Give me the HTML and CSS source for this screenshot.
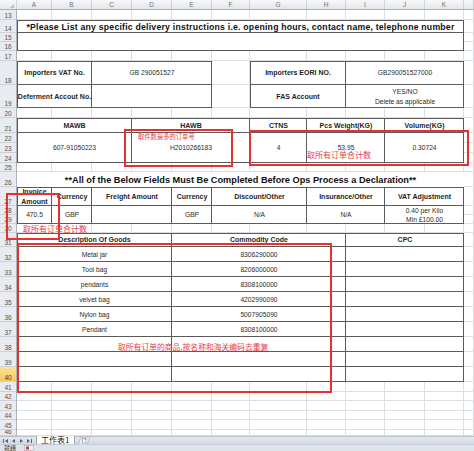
FILE: index.html
```html
<!DOCTYPE html>
<html>
<head>
<meta charset="utf-8">
<link rel="stylesheet" href="styles.css">
</head>
<body>
<div class="sheet">
  <div class="colhdrs">
    <span class="corner"></span><span>A</span><span>B</span><span>C</span><span>D</span><span>E</span><span>F</span><span>G</span><span>H</span><span>I</span><span>J</span><span>K</span><span></span>
  </div>
  <div class="rowhdrs">
    <span>13</span><span>14</span><span>15</span><span>16</span><span>17</span><span>18</span><span>19</span><span>20</span><span>21</span><span>22</span><span>23</span><span>24</span><span>25</span><span>26</span><span>27</span><span>28</span><span>29</span><span>30</span><span>31</span><span>32</span><span>33</span><span>34</span><span>35</span><span>36</span><span>37</span><span>38</span><span>39</span><span class="sel">40</span><span>41</span><span>42</span><span>43</span><span>44</span><span>45</span><span>46</span>
  </div>
  <div class="hlines"><i></i><i></i><i></i><i></i><i></i><i></i><i></i><i></i><i></i><i></i><i></i><i></i><i></i><i></i><i></i><i></i><i></i><i></i><i></i><i></i><i></i><i></i><i></i><i></i><i></i><i></i><i></i><i></i><i></i><i></i><i></i><i></i><i></i><i></i></div>
  <div class="vlines"><i></i><i></i><i></i><i></i><i></i><i></i><i></i><i></i><i></i><i></i><i></i><i></i></div>

  <div class="tbl box14">
    <div class="c title14">*Please List any specific delivery instructions i.e. opening hours, contact name, telephone number</div>
    <div class="c"></div>
  </div>

  <div class="tbl vat">
    <div class="c b">Importers VAT No.</div><div class="c">GB 290051527</div>
    <div class="c b">Deferment Accout No.</div><div class="c"></div>
  </div>

  <div class="tbl eori">
    <div class="c b">Importers EORI NO.</div><div class="c">GB290051527000</div>
    <div class="c b">FAS Account</div><div class="c two">YES/NO<br>Delete as applicable</div>
  </div>

  <div class="tbl awb">
    <div class="c b">MAWB</div><div class="c b">HAWB</div><div class="c b">CTNS</div><div class="c b">Pcs Weight(KG)</div><div class="c b">Volume(KG)</div>
    <div class="c">607-91050223</div><div class="c">H2010266183</div><div class="c">4</div><div class="c">53.95</div><div class="c">0.30724</div>
  </div>

  <div class="title26">**All of the Below Fields Must Be Completed Before Ops Process a Declaration**</div>

  <div class="tbl inv">
    <div class="c b two">Invoice<br>Amount</div><div class="c b">Currency</div><div class="c b top">Freight Amount</div><div class="c b">Currency</div><div class="c b">Discount/Other</div><div class="c b">Insurance/Other</div><div class="c b">VAT Adjustment</div>
    <div class="c">470.5</div><div class="c">GBP</div><div class="c"></div><div class="c">GBP</div><div class="c">N/A</div><div class="c">N/A</div><div class="c two">0.40 per Kilo<br>Min £100.00</div>
  </div>

  <div class="tbl goods">
    <div class="c b">Description Of Goods</div><div class="c b">Commodity Code</div><div class="c b">CPC</div>
    <div class="c">Metal jar</div><div class="c">8306290000</div><div class="c"></div>
    <div class="c">Tool bag</div><div class="c">8206000000</div><div class="c"></div>
    <div class="c">pendants</div><div class="c">8308100000</div><div class="c"></div>
    <div class="c">velvet bag</div><div class="c">4202990090</div><div class="c"></div>
    <div class="c">Nylon bag</div><div class="c">5007905090</div><div class="c"></div>
    <div class="c">Pendant</div><div class="c">8308100000</div><div class="c"></div>
    <div class="c"></div><div class="c"></div><div class="c"></div>
    <div class="c"></div><div class="c"></div><div class="c"></div>
    <div class="c"></div><div class="c"></div><div class="c"></div>
  </div>

  <div class="mark m1"></div>
  <div class="mark m2"></div>
  <div class="mark m3"></div>
  <div class="mark m4"></div>

  <div class="note n1">取件数最多的订单号</div>
  <div class="note n2">取所有订单合计数</div>
  <div class="note n3">取所有订单合计数</div>
  <div class="note n4">取所有订单的商品,按名称和海关编码去重复</div>
</div>

<div class="tabs">
  <svg class="nav" width="30" height="6" viewBox="0 0 30 6">
    <rect x="0" y="1" width="1" height="4" fill="#5a6470"/>
    <polygon points="5,1 5,5 2,3" fill="#5a6470"/>
    <polygon points="12,1 12,5 9,3" fill="#5a6470"/>
    <polygon points="17,1 17,5 20,3" fill="#5a6470"/>
    <polygon points="24,1 24,5 27,3" fill="#5a6470"/>
    <rect x="28" y="1" width="1" height="4" fill="#5a6470"/>
  </svg>
  <div class="tab">工作表1</div>
  <svg class="newsheet" width="12" height="8" viewBox="0 0 12 8">
    <polygon points="0,8 3,0 12,0 9,8" fill="#e9edf2" stroke="#9aa5b2" stroke-width="0.6"/>
    <rect x="4.5" y="1.5" width="3.5" height="4.5" fill="#fff" stroke="#7b8796" stroke-width="0.6"/>
    <circle cx="7.5" cy="2" r="1" fill="#e3a21a"/>
  </svg>
</div>
<div class="status">
  <span class="ready">就绪</span>
  <svg class="rec" width="10" height="6" viewBox="0 0 10 6">
    <rect x="0.5" y="0.5" width="9" height="5" fill="#f4f6f8" stroke="#9aa5b2" stroke-width="0.6"/>
    <rect x="2" y="1.5" width="3" height="3" fill="#c43c3c"/>
  </svg>
</div>
</body>
</html>
```

FILE: styles.css
```css
:root {
  --cols: 35px 40px 40px 40px 40px 38px 57px 39px 39px 40px 39px 10px;
  --rows: 10px 13px 9px 9px 10px 24px 23px 10px 15px 10px 10px 10px 9px 15px 19px 9px 9px 9px 14px repeat(9, 15px) 10px 9px 10px 9px 10px 6px;
  --line: #5b5b5b;
  --grid: #dcdfe2;
  --red: #e5312f;
}

* {
  box-sizing: border-box;
  margin: 0;
  padding: 0;
}

html,
body {
  width: 474px;
  height: 451px;
  overflow: hidden;
  background: #fff;
}

body {
  font-family: "Liberation Sans", Arial, "Noto Sans CJK SC", sans-serif;
  font-size: 6.7px;
  color: #2a2a2a;
}

.sheet {
  position: relative;
  display: grid;
  grid-template-columns: 17px var(--cols);
  grid-template-rows: 10px var(--rows);
  height: 436px;
  overflow: hidden;
}

/* column headers */
.colhdrs {
  grid-row: 1;
  grid-column: 1 / -1;
  display: grid;
  grid-template-columns: 17px var(--cols);
  background: linear-gradient(#f7f8fa, #e3e6ea);
  border-bottom: 1px solid #aab2bc;
}

.colhdrs span {
  border-right: 1px solid #cdd2d8;
  text-align: center;
  font-size: 6.5px;
  line-height: 9px;
  color: #6d7278;
}

.colhdrs .corner {
  position: relative;
}

.colhdrs .corner::after {
  content: "";
  position: absolute;
  right: 2px;
  bottom: 1px;
  border-left: 4px solid transparent;
  border-bottom: 4px solid #b8bec6;
}

/* row headers */
.rowhdrs {
  grid-column: 1;
  grid-row: 2 / -1;
  display: grid;
  grid-template-rows: var(--rows);
  background: #e8ebef;
  border-right: 1px solid #aab2bc;
}

.rowhdrs span {
  border-bottom: 1px solid #cdd2d8;
  font-size: 6.5px;
  line-height: 7px;
  color: #4d535a;
  display: flex;
  align-items: flex-end;
  justify-content: center;
  overflow: hidden;
}

.rowhdrs .sel {
  background: linear-gradient(#fbe39a, #f4c95a);
  color: #3a3a3a;
}

/* gridlines */
.hlines {
  grid-column: 2 / -1;
  grid-row: 2 / -1;
  display: grid;
  grid-template-rows: var(--rows);
}

.hlines i {
  border-bottom: 1px solid var(--grid);
}

.vlines {
  grid-column: 2 / -1;
  grid-row: 2 / -1;
  display: grid;
  grid-template-columns: var(--cols);
}

.vlines i {
  border-right: 1px solid var(--grid);
}

/* bordered tables */
.tbl {
  display: grid;
  background: #fff;
  box-shadow: inset 1px 1px 0 var(--line);
}

.c {
  box-shadow: inset -1px -1px 0 var(--line);
  display: flex;
  align-items: center;
  justify-content: center;
  text-align: center;
  line-height: 8px;
  white-space: nowrap;
}

.b {
  font-weight: bold;
  font-size: 7px;
  color: #1f1f1f;
}

.two {
  line-height: 9.5px;
}

.box14 {
  grid-column: 2 / 13;
  grid-row: 3 / 6;
  grid-template-rows: 13px 18px;
}

.title14 {
  font-weight: bold;
  font-size: 8.7px;
  letter-spacing: 0.22px;
  color: #111;
}

.vat {
  grid-column: 2 / 7;
  grid-row: 7 / 9;
  grid-template-columns: 75px 120px;
  grid-template-rows: 24px 23px;
}

.eori {
  grid-column: 8 / 13;
  grid-row: 7 / 9;
  grid-template-columns: 96px 118px;
  grid-template-rows: 24px 23px;
}

.awb {
  grid-column: 2 / 13;
  grid-row: 10 / 14;
  grid-template-columns: 115px 118px 57px 78px 79px;
  grid-template-rows: 15px 30px;
}

.title26 {
  grid-column: 2 / 13;
  grid-row: 15;
  background: #fff;
  display: flex;
  align-items: center;
  justify-content: center;
  font-weight: bold;
  font-size: 9.2px;
  color: #111;
  white-space: nowrap;
}

.inv {
  grid-column: 2 / 13;
  grid-row: 16 / 19;
  grid-template-columns: 35px 40px 80px 40px 95px 78px 79px;
  grid-template-rows: 19px 18px;
}

.goods {
  grid-column: 2 / 13;
  grid-row: 20 / 30;
  grid-template-columns: 155px 174px 118px;
  grid-template-rows: 14px repeat(9, 15px);
}

/* red annotations */
.mark {
  position: absolute;
  border: 2px solid var(--red);
}

.m1 { left: 124px; top: 129px; width: 109px; height: 38px; }
.m2 { left: 249px; top: 130px; width: 220px; height: 36px; }
.m3 { left: 6px; top: 193px; width: 54px; height: 47px; }
.m4 { left: 17px; top: 243px; width: 315px; height: 150px; }

.note {
  position: absolute;
  color: #ea3b3e;
  font-family: "Noto Sans CJK SC", sans-serif;
  white-space: nowrap;
  line-height: 1;
}

.n1 { left: 138px; top: 134px; font-size: 6.3px; }
.n2 { left: 307px; top: 151px; font-size: 8px; }
.n3 { left: 23px; top: 225px; font-size: 8px; }
.n4 { left: 118px; top: 343px; font-size: 7.8px; }

/* sheet tabs and status */
.tabs {
  height: 8px;
  display: flex;
  align-items: center;
  gap: 3px;
  padding-left: 3px;
  background: linear-gradient(#e2e7ed, #d3dae3);
  border-top: 1px solid #b9c1cb;
}

.tab {
  font-family: "Noto Sans CJK SC", sans-serif;
  font-size: 8px;
  line-height: 8px;
  color: #222;
  background: #fff;
  padding: 0 5px 0 4px;
  margin-top: -1px;
  border-left: 1px solid #9aa5b2;
  border-right: 1px solid #9aa5b2;
}

.status {
  height: 7px;
  display: flex;
  align-items: center;
  gap: 8px;
  padding-left: 4px;
  background: #dfe4ea;
  border-top: 1px solid #c6cdd6;
}

.ready {
  font-family: "Noto Sans CJK SC", sans-serif;
  font-size: 6px;
  line-height: 6px;
  color: #333;
}
```
